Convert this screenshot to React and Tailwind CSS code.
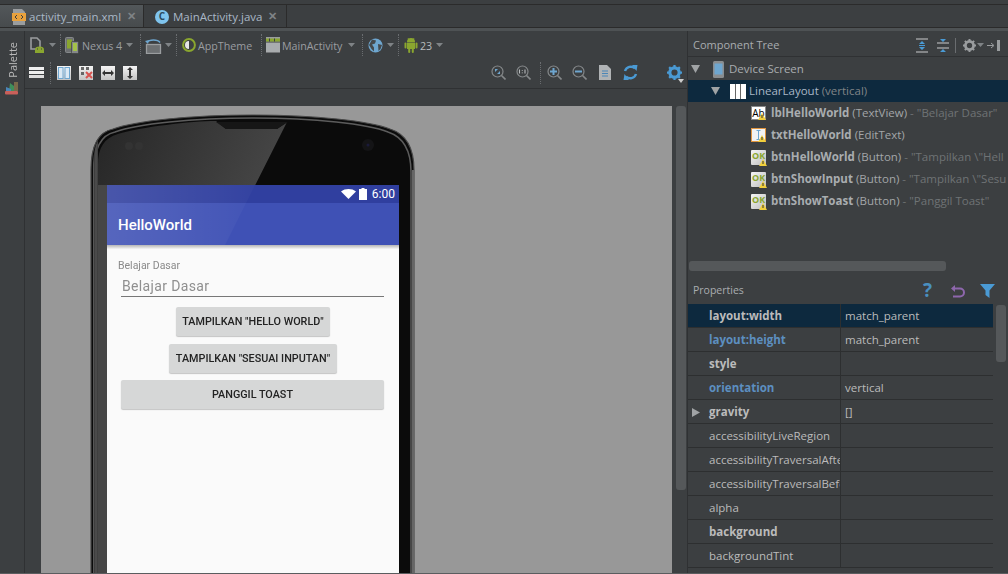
import React from "react";

const ide = { fontFamily: '"Open Sans", "Noto Sans", sans-serif' };
const droid = { fontFamily: 'Roboto, sans-serif' };

function Caret({ className = "" }) {
  return (
    <svg width="7" height="4" viewBox="0 0 7 4" className={className}>
      <path d="M0 0h7L3.500 4z" fill="#7f8386" />
    </svg>
  );
}

function Sep({ className = "" }) {
  return <div className={`w-0 h-[22px] border-l border-dotted border-[#6a6d70] ${className}`} />;
}

function Android({ w = 14, h = 16 }) {
  return (
    <svg width={w} height={h} viewBox="0 0 14 16">
      <path d="M3 5a4 4 0 0 1 8 0z" fill="#8aa62f" />
      <path d="M4 1l1 2M10 1L9 3" stroke="#8aa62f" strokeWidth="0.8" />
      <rect x="3" y="5.500" width="8" height="6.500" fill="#8aa62f" />
      <rect x="0.500" y="5.500" width="2" height="6" rx="1" fill="#8aa62f" />
      <rect x="11.500" y="5.500" width="2" height="6" rx="1" fill="#8aa62f" />
      <rect x="4.200" y="11" width="2" height="5" rx="1" fill="#8aa62f" />
      <rect x="7.800" y="11" width="2" height="5" rx="1" fill="#8aa62f" />
    </svg>
  );
}

function DeviceIcon() {
  return (
    <svg width="15" height="17" viewBox="0 0 15 17">
      <path d="M1 1h6l3 3v8H1z" fill="none" stroke="#9a9d9f" strokeWidth="1.600" />
      <path d="M5 12.500a4.500 3 0 0 1 9 0v3.500H5z" fill="#8aa62f" />
      <rect x="7" y="11.500" width="1" height="1" fill="#3c3f41" />
      <rect x="11" y="11.500" width="1" height="1" fill="#3c3f41" />
    </svg>
  );
}

function NexusIcon() {
  return (
    <svg width="14" height="17" viewBox="0 0 14 17">
      <rect x="0.500" y="0.500" width="8" height="15" rx="1" fill="#6d7072" stroke="#85888a" />
      <rect x="2" y="2.500" width="5" height="9" fill="#8aa62f" />
      <rect x="6.500" y="4.500" width="7" height="12" rx="1" fill="#85888a" stroke="#3c3f41" strokeWidth="0.700" />
      <rect x="8" y="6" width="4" height="8" fill="#a4c24a" />
    </svg>
  );
}

function RotateIcon() {
  return (
    <svg width="17" height="17" viewBox="0 0 17 17">
      <path d="M2 5.500a7 4 0 0 1 13 0" fill="none" stroke="#6ea6cf" strokeWidth="1.400" />
      <path d="M0 4l4-1-1 4z" fill="#6ea6cf" />
      <rect x="1.500" y="7.500" width="14" height="9" fill="#6d7072" stroke="#9a9d9f" strokeWidth="1.300" />
    </svg>
  );
}

function ThemeIcon() {
  return (
    <svg width="14" height="14" viewBox="0 0 14 14">
      <circle cx="7" cy="7" r="5.900" fill="#3c3f41" stroke="#8aa62f" strokeWidth="2" />
      <path d="M7 3a4 4 0 0 0 0 8z" fill="#e6e6e6" />
    </svg>
  );
}

function ActivityIcon() {
  return (
    <svg width="14" height="16" viewBox="0 0 14 16">
      <rect y="0" width="14" height="4.500" fill="#9a9d9f" />
      <rect y="1.500" width="14" height="3" fill="#8aa62f" />
      <rect x="3" y="1.500" width="1" height="3" fill="#3c3f41" />
      <rect x="8" y="1.500" width="1" height="3" fill="#3c3f41" />
      <rect y="5.500" width="14" height="10" fill="#a9acae" />
    </svg>
  );
}

function GlobeIcon() {
  return (
    <svg width="15" height="15" viewBox="0 0 15 15">
      <circle cx="7.500" cy="7.500" r="7" fill="#6ea6cf" />
      <path d="M4 1.500l4 1-1 3-3 1 2 3v4L3.500 11 1 7zM10 6l4 1-1.500 4-2 2z" fill="#45494c" />
    </svg>
  );
}

function ToolButton({ children }) {
  return (
    <div className="w-[14px] h-[14px] flex items-center justify-center bg-gradient-to-b from-[#f4f4f4] to-[#c4c4c4]">
      {children}
    </div>
  );
}

function ZoomIcon({ children }) {
  return (
    <svg width="15" height="15" viewBox="0 0 15 15">
      <circle cx="6.500" cy="6.500" r="5.500" fill="none" stroke="#85888a" strokeWidth="1.200" />
      <path d="M10.500 10.500l4 4" stroke="#85888a" strokeWidth="1.600" />
      {children}
    </svg>
  );
}

function Gear({ size = 15, color = "#4a9ad4" }) {
  return (
    <svg width={size} height={size} viewBox="0 0 16 16">
      <path d="M8 8m-5 0a5 5 0 1 0 10 0a5 5 0 1 0-10 0" fill="none" stroke={color} strokeWidth="3.400" />
      <path d="M8 0v3M8 13v3M0 8h3M13 8h3M2.300 2.300l2.200 2.200M11.500 11.500l2.200 2.200M2.300 13.700l2.200-2.200M11.500 4.500l2.200-2.200" stroke={color} strokeWidth="2.400" />
    </svg>
  );
}

function Triangle() {
  return (
    <svg width="9" height="8" viewBox="0 0 9 8">
      <path d="M0 0h9L4.500 8z" fill="#a0a3a5" />
    </svg>
  );
}

function Warning() {
  return (
    <svg width="8" height="7" viewBox="0 0 8 7" className="absolute right-[-1px] bottom-[-1px]">
      <path d="M4 0l4 7H0z" fill="#f0cf3c" />
      <path d="M4 2v3" stroke="#333" strokeWidth="1" />
    </svg>
  );
}

function NodeIcon({ kind }) {
  if (kind === "text")
    return (
      <div className="relative w-[15px] h-[14px] bg-white border border-[#888] flex items-center justify-center text-[10px] leading-none text-black">
        Ab
        <Warning />
      </div>
    );
  if (kind === "edit")
    return (
      <div className="relative w-[15px] h-[14px] bg-[#f2f2f2] border border-[#e0953f] flex items-center justify-center">
        <svg width="5" height="10" viewBox="0 0 5 10">
          <path d="M0.500 0.500h4M0.500 9.500h4M2.500 0.500v9" stroke="#6ea6cf" fill="none" />
        </svg>
        <Warning />
      </div>
    );
  return (
    <div className="relative w-[15px] h-[15px] rounded-[1px] bg-gradient-to-br from-[#f6f6f6] to-[#bdbdbd] text-[#8aa62f] text-[9px] font-bold leading-[12px] pl-[1px]">
      OK
      <Warning />
    </div>
  );
}

const treeRows = [
  ["text", "lblHelloWorld", "(TextView)", '- "Belajar Dasar"'],
  ["edit", "txtHelloWorld", "(EditText)", ""],
  ["btn", "btnHelloWorld", "(Button)", '- "Tampilkan \\"Hell'],
  ["btn", "btnShowInput", "(Button)", '- "Tampilkan \\"Sesu'],
  ["btn", "btnShowToast", "(Button)", '- "Panggil Toast"'],
];

const props = [
  { name: "layout:width", value: "match_parent", bold: true, active: true },
  { name: "layout:height", value: "match_parent", bold: true, blue: true },
  { name: "style", bold: true },
  { name: "orientation", value: "vertical", bold: true, blue: true },
  { name: "gravity", value: "[]", bold: true, arrow: true },
  { name: "accessibilityLiveRegion" },
  { name: "accessibilityTraversalAfter" },
  { name: "accessibilityTraversalBefore" },
  { name: "alpha" },
  { name: "background", bold: true },
  { name: "backgroundTint" },
];

function PhoneFrame() {
  return (
    <svg width="330" height="464" viewBox="88 110 330 464" className="absolute inset-0">
      <defs>
        <linearGradient id="leftEdge" x1="0" x2="1" y1="0" y2="0">
          <stop offset="0" stopColor="#6a6a6a" />
          <stop offset="0.25" stopColor="#3a3a3a" />
          <stop offset="0.6" stopColor="#505050" />
          <stop offset="1" stopColor="#3a3a3a" />
        </linearGradient>
        <linearGradient id="glassTop" x1="0" x2="1" y1="0" y2="0.300">
          <stop offset="0" stopColor="#262626" />
          <stop offset="1" stopColor="#474747" />
        </linearGradient>
      </defs>
      <path d="M91 574V170C91 145 98 132 113 129C135 121 190 115 252 115C315 115 370 121 390 129C406 134 414 148 414 170V574Z" fill="#0b0b0b" stroke="#4a4a4a" strokeWidth="1.200" />
      <path d="M94 574V172C94 148 101 135 115 132C137 124 192 118 252 118C315 118 368 124 388 132C403 137 411 150 411 172V574" fill="none" stroke="#5c5c5c" strokeWidth="1.500" />
      <path d="M98 185V165C98 148 104 138 118 134C140 127 192 121 216 121L226 129H277L287 122L225 245H107V185Z" fill="url(#glassTop)" />
      <path d="M93 574V170C93 155 95 146 98 140V574Z" fill="url(#leftEdge)" />
      <rect x="98" y="185" width="9" height="389" fill="#464646" />
      <path d="M216 122H288L277 129H226Z" fill="#161616" />
      <circle cx="368" cy="145" r="6" fill="#141416" />
      <circle cx="368" cy="145" r="1.500" fill="#1a1a3a" />
      <circle cx="129" cy="146" r="4" fill="#333" />
      <circle cx="139" cy="146" r="4" fill="#333" />
      <rect x="412" y="170" width="2" height="404" fill="#666" />
    </svg>
  );
}

function AndroidScreen() {
  return (
    <div className="relative w-[292px] h-[389px] bg-[#fafafa] flex flex-col" style={droid}>
      <div className="h-[18px] bg-[#303f9f] flex items-center justify-end pr-[4px] gap-[3px] text-white">
        <svg width="15" height="10" viewBox="0 0 15 10">
          <path d="M0 2.500C4 -0.800 11 -0.800 15 2.500L7.500 10z" fill="#fff" />
        </svg>
        <svg width="8" height="12" viewBox="0 0 8 12">
          <path d="M2.500 0h3v1H8v11H0V1h2.500z" fill="#fff" />
        </svg>
        <span className="text-[12px] ml-[2px] leading-none">6:00</span>
      </div>
      <div className="h-[42px] bg-[#3f51b5] flex items-center pl-[11px] pt-[2px] text-white text-[15px] font-medium">HelloWorld</div>
      <div className="h-[4px] bg-gradient-to-b from-[#b5b5b5] to-[#f6f6f6]" />
      <div className="flex flex-col blur-[0.25px]">
        <div className="pl-[11px] mt-[10px] text-[10.500px] leading-[14px] text-[#8a8a8a]">Belajar Dasar</div>
        <div className="ml-[14px] mr-[15px] mt-[4px] h-[20px] border-b border-[#777] pl-px text-[14px] leading-[18px] tracking-[0.35px] text-[#8f8f8f]">Belajar Dasar</div>
        <div className="flex justify-center mt-[10px]">
          <div className="w-[154px] h-[29px] pt-[2px] bg-[#d6d7d7] rounded-[2px] shadow-[0_1px_1px_#c4c4c4] flex items-center justify-center text-[10.800px] font-medium text-[#222]">TAMPILKAN "HELLO WORLD"</div>
        </div>
        <div className="flex justify-center mt-[8px]">
          <div className="w-[168px] h-[29px] pt-[2px] bg-[#d6d7d7] rounded-[2px] shadow-[0_1px_1px_#c4c4c4] flex items-center justify-center text-[10.800px] font-medium text-[#222]">TAMPILKAN "SESUAI INPUTAN"</div>
        </div>
        <div className="ml-[14px] mr-[15px] mt-[7px] h-[29px] pt-[2px] bg-[#d6d7d7] rounded-[2px] shadow-[0_1px_1px_#c4c4c4] flex items-center justify-center text-[10.800px] font-medium text-[#222]">PANGGIL TOAST</div>
      </div>
      {/* glass reflection over the top of the screen */}
      <svg width="292" height="60" viewBox="0 0 292 60" className="absolute left-0 top-0 pointer-events-none">
        <defs>
          <linearGradient id="shine" x1="0" x2="1" y1="0" y2="0">
            <stop offset="0" stopColor="#fff" stopOpacity="0.12" />
            <stop offset="1" stopColor="#fff" stopOpacity="0.02" />
          </linearGradient>
        </defs>
        <path d="M0 0H148L118 60H0Z" fill="url(#shine)" />
      </svg>
    </div>
  );
}

export default function App() {
  return (
    <div className="w-[1008px] h-[574px] overflow-hidden bg-[#3c3f41] flex flex-col text-[#bbbbbb]" style={ide}>
      <div className="h-[5px] shrink-0 border-b border-[#2b2b2b]" />

      {/* editor tabs */}
      <div className="h-[23px] shrink-0 flex text-[11.500px] border-b border-[#2b2b2b]">
        <div className="w-[144px] flex items-center pl-[12px] pt-[1px] bg-gradient-to-b from-[#52575a] to-[#474b4d] border-r border-[#2b2b2b]">
          <svg width="14" height="16" viewBox="0 0 14 16">
            <path d="M1 0h9l3 3v13H1z" fill="#9a9d9f" />
            <rect x="0" y="4" width="14" height="8" fill="#e9a13c" />
            <path d="M5 6L3 8l2 2M9 6l2 2-2 2" stroke="#3c3f41" fill="none" />
          </svg>
          <span className="ml-[3px] text-[#a9b7c6]">activity_main.xml</span>
          <span className="ml-[6px] text-[#7f8386] text-[11px] font-bold">✕</span>
        </div>
        <div className="w-[143px] flex items-center pl-[11px] pt-[1px] border-r border-[#2b2b2b]">
          <div className="w-[14px] h-[14px] rounded-full bg-[#7fc4ee] text-[#2b4a5e] text-[10px] font-bold flex items-center justify-center">C</div>
          <span className="ml-[4px] text-[#a9b7c6]">MainActivity.java</span>
          <span className="ml-[6px] text-[#7f8386] text-[11px] font-bold">✕</span>
        </div>
      </div>
      <div className="h-[3px] shrink-0 bg-[#4e5254]" />

      <div className="flex-1 flex min-h-0">
        {/* palette strip */}
        <div className="w-[25px] shrink-0 border-r border-[#2f3133] flex flex-col items-center pt-[11px]">
          <span className="text-[11px] leading-none [writing-mode:vertical-rl] rotate-180">Palette</span>
          <svg width="14" height="14" viewBox="0 0 14 14" className="mt-[3px]">
            <path d="M9 1h4v9H9z" fill="#7a6a4a" />
            <path d="M5 2l4 3v5H4z" fill="#3f8f5a" />
            <path d="M1 6l5 2v2H1z" fill="#4a86b8" />
            <rect x="0" y="10" width="13" height="3.500" rx="1" fill="#c9605a" />
          </svg>
        </div>

        {/* layout editor */}
        <div className="w-[663px] shrink-0 flex flex-col border-r border-[#2f3133]">
          <div className="h-[28px] shrink-0 flex items-center text-[10.700px] text-[#9a9da0]">
            <div className="ml-[5px]"><DeviceIcon /></div>
            <Caret className="ml-[4px]" />
            <Sep className="ml-[4px]" />
            <div className="ml-[4px]"><NexusIcon /></div>
            <span className="ml-[3px] pt-[2px] w-[40px] whitespace-nowrap">Nexus 4</span>
            <Caret className="ml-[4px]" />
            <Sep className="ml-[7px]" />
            <div className="ml-[4px]"><RotateIcon /></div>
            <Caret className="ml-[3px]" />
            <Sep className="ml-[4px]" />
            <div className="ml-[5px]"><ThemeIcon /></div>
            <span className="ml-[2px] pt-[2px] w-[54px] whitespace-nowrap">AppTheme</span>
            <Sep className="ml-[9px]" />
            <div className="ml-[4px]"><ActivityIcon /></div>
            <span className="ml-[2px] pt-[2px] w-[62px] whitespace-nowrap">MainActivity</span>
            <Caret className="ml-[4px]" />
            <Sep className="ml-[7px]" />
            <div className="ml-[5px]"><GlobeIcon /></div>
            <Caret className="ml-[4px]" />
            <Sep className="ml-[4px]" />
            <div className="ml-[5px]"><Android /></div>
            <span className="ml-[2px] pt-[2px] w-[11px] text-[#b8bbbd]">23</span>
            <Caret className="ml-[5px]" />
          </div>

          <div className="h-[30px] shrink-0 flex items-center pb-[2px] border-b border-[#2f3133]">
            <div className="ml-[4px] w-[15px] flex flex-col gap-[1px]">
              <div className="h-[3px] bg-[#eeeeee]" />
              <div className="h-[3px] bg-[#eeeeee]" />
              <div className="h-[3px] bg-[#dddddd]" />
            </div>
            <Sep className="ml-[6px]" />
            <div className="ml-[6px]">
              <ToolButton>
                <svg width="12" height="12" viewBox="0 0 12 12">
                  <rect x="0.500" y="0.500" width="4.500" height="11" fill="#dbe9f4" stroke="#6ea6cf" />
                  <rect x="7" y="0.500" width="4.500" height="11" fill="#dbe9f4" stroke="#6ea6cf" />
                </svg>
              </ToolButton>
            </div>
            <div className="ml-[8px]">
              <ToolButton>
                <svg width="13" height="13" viewBox="0 0 13 13">
                  <path d="M1 1h3v3H1zM6 1h3v3H6zM1 6h3v3H1z" fill="#666" />
                  <path d="M6 6l6 6M12 6l-6 6" stroke="#d9534f" strokeWidth="2" />
                </svg>
              </ToolButton>
            </div>
            <div className="ml-[8px]">
              <ToolButton>
                <svg width="12" height="8" viewBox="0 0 12 8">
                  <path d="M0 4l3-3v2h6V1l3 3-3 3V5H3v2z" fill="#333" />
                </svg>
              </ToolButton>
            </div>
            <div className="ml-[8px]">
              <ToolButton>
                <svg width="8" height="12" viewBox="0 0 8 12">
                  <path d="M4 0l3 3H5v6h2l-3 3-3-3h2V3H1z" fill="#333" />
                </svg>
              </ToolButton>
            </div>
            <div className="flex-1" />
            <ZoomIcon>
              <path d="M4 4h3L4 7zM9 9H6l3-3z" fill="#6ea6cf" />
            </ZoomIcon>
            <div className="ml-[10px]">
              <ZoomIcon>
                <path d="M3.500 4.500v4M9 4.500v4M6.300 5v.8M6.300 7.500v.8" stroke="#b8bbbd" strokeWidth="1.100" />
              </ZoomIcon>
            </div>
            <Sep className="ml-[9px]" />
            <div className="ml-[6px]">
              <ZoomIcon>
                <path d="M3 6.500h7M6.500 3v7" stroke="#6ea6cf" strokeWidth="2" />
              </ZoomIcon>
            </div>
            <div className="ml-[10px]">
              <ZoomIcon>
                <path d="M3 6.500h7" stroke="#6ea6cf" strokeWidth="2" />
              </ZoomIcon>
            </div>
            <div className="ml-[12px]">
              <svg width="12" height="15" viewBox="0 0 12 15">
                <path d="M0 0h8l4 4v11H0z" fill="#b0b3b5" />
                <path d="M3 6h6M3 8.500h6M3 11h6" stroke="#4a86b8" strokeWidth="1.200" />
              </svg>
            </div>
            <div className="ml-[12px]">
              <svg width="15" height="15" viewBox="0 0 15 15">
                <path d="M12 3.500A6 6 0 0 0 2 6M3 11.500A6 6 0 0 0 13 9" fill="none" stroke="#4a9ad4" strokeWidth="2.400" />
                <path d="M9 0l5.500 0-1 6zM6 15H.500l1-6z" fill="#4a9ad4" />
              </svg>
            </div>
            <div className="relative ml-[29px] mr-[5px]">
              <Gear />
              <svg width="6" height="4" viewBox="0 0 6 4" className="absolute right-[-2px] bottom-[-3px]">
                <path d="M0 0h6L3 4z" fill="#cccccc" />
              </svg>
            </div>
          </div>

          {/* canvas */}
          <div className="flex-1 min-h-0 flex pt-[17px] pl-[16px]">
            <div className="w-[631px] bg-[#989898] pt-[4px] pl-[47px] overflow-hidden">
              <div className="relative w-[330px] h-[464px] pl-[19px] pt-[75px]">
                <PhoneFrame />
                <div className="relative">
                  <AndroidScreen />
                </div>
              </div>
            </div>
            <div className="w-[10px] ml-[4px] h-[384px] rounded-[3px] bg-[#55585a]" />
          </div>
        </div>

        {/* right panels */}
        <div className="flex-1 min-w-0 flex flex-col text-[11.500px]">
          <div className="h-[26px] shrink-0 flex items-center pl-[5px] pt-[3px] border-b border-[#2f3133] text-[#a9adb0]">
            <span className="text-[11px]">Component Tree</span>
            <div className="flex-1" />
            <svg width="14" height="15" viewBox="0 0 14 15">
              <path d="M1 1h12M1 14h12" stroke="#9a9d9f" strokeWidth="1.500" />
              <path d="M7 3l3 3H4zM7 12l3-3H4z" fill="#4a9ad4" />
              <path d="M4 7.500h6" stroke="#4a9ad4" />
            </svg>
            <svg width="14" height="15" viewBox="0 0 14 15" className="ml-[7px]">
              <path d="M1 5h12M1 10h12" stroke="#9a9d9f" strokeWidth="1.500" />
              <path d="M7 4l3-3H4zM7 11l3 3H4z" fill="#4a9ad4" />
            </svg>
            <div className="ml-[5px] w-px h-[15px] bg-[#6a6d70]" />
            <div className="ml-[7px]"><Gear size={13} color="#9a9d9f" /></div>
            <Caret className="ml-[1px]" />
            <svg width="14" height="11" viewBox="0 0 14 11" className="ml-[3px] mr-[7px]">
              <path d="M0 5.500h6M4 3l3 2.500L4 8" stroke="#9a9d9f" fill="none" />
              <rect x="10" y="0" width="3" height="11" fill="#9a9d9f" />
            </svg>
          </div>

          <div className="h-[204px] shrink-0 pt-px overflow-hidden">
            <div className="h-[22px] flex items-center pl-[3px]">
              <Triangle />
              <svg width="11" height="17" viewBox="0 0 11 17" className="ml-[13px]">
                <rect width="11" height="17" rx="1.500" fill="#8a8d8f" />
                <rect x="1.500" y="2.500" width="8" height="11" fill="#6ea6cf" />
              </svg>
              <span className="ml-[5px] text-[#a9adb0]">Device Screen</span>
            </div>
            <div className="h-[22px] flex items-center pl-[23px] bg-[#0d293e]">
              <Triangle />
              <div className="ml-[10px] w-[16px] h-[15px] bg-white flex justify-evenly">
                <div className="w-px bg-[#666]" />
                <div className="w-px bg-[#666]" />
              </div>
              <span className="ml-[3px] text-[#a9b7c6]">LinearLayout <span className="text-[#808487]">(vertical)</span></span>
            </div>
            {treeRows.map((row) => (
              <div key={row[1]} className="h-[22px] flex items-center pl-[63px] whitespace-nowrap">
                <NodeIcon kind={row[0]} />
                <span className="ml-[5px] font-bold text-[#a9adb0]">{row[1]}</span>
                <span className="ml-[3px] text-[#a3a6a8]">{row[2]}</span>
                <span className="ml-[3px] text-[#6f7375]">{row[3]}</span>
              </div>
            ))}
          </div>
          <div className="h-[10px] shrink-0 ml-px w-[257px] rounded-[3px] bg-[#55585a]" />

          <div className="h-[33px] shrink-0 flex items-center pl-[5px] pt-[6px] text-[#a9adb0]">
            <span className="text-[10.500px]">Properties</span>
            <div className="flex-1" />
            <span className="text-[19px] font-bold leading-none text-[#4a8fbf]">?</span>
            <svg width="15" height="14" viewBox="0 0 15 14" className="ml-[18px]">
              <path d="M5 1L1 4.500 5 8V5.500h5a3 3 0 0 1 0 6H3V13.500h7a5 5 0 0 0 0-10H5z" fill="#8e67ad" />
            </svg>
            <svg width="15" height="14" viewBox="0 0 15 14" className="ml-[15px] mr-[13px]">
              <path d="M0 0h15L9.500 6.500V14L5.500 11V6.500z" fill="#4a9ad4" />
            </svg>
          </div>

          <div className="flex-1 min-h-0 flex overflow-hidden">
            <div className="w-[305px] shrink-0">
              {props.map((p) => (
                <div key={p.name} className={`h-[24px] flex items-center border-b border-[#2d2f30] ${p.active ? "bg-[#0d293e]" : ""}`}>
                  <div className="w-[153px] shrink-0 h-full pt-px flex items-center border-r border-[#2d2f30] overflow-hidden whitespace-nowrap">
                    <div className="w-[21px] shrink-0 pl-[4px] flex">
                      {p.arrow && (
                        <svg width="8" height="9" viewBox="0 0 8 9">
                          <path d="M0 0l8 4.500L0 9z" fill="#a0a3a5" />
                        </svg>
                      )}
                    </div>
                    <span className={`${p.bold ? "font-bold" : ""} ${p.blue ? "text-[#5c8fc0]" : ""}`}>{p.name}</span>
                  </div>
                  <span className="pl-[4px] pt-px">{p.value}</span>
                </div>
              ))}
            </div>
            <div className="w-[10px] ml-[3px] h-[57px] mt-px rounded-[3px] bg-[#55585a]" />
          </div>
        </div>
      </div>
      <div className="h-px shrink-0 bg-[#5a5d5f]" />
    </div>
  );
}
